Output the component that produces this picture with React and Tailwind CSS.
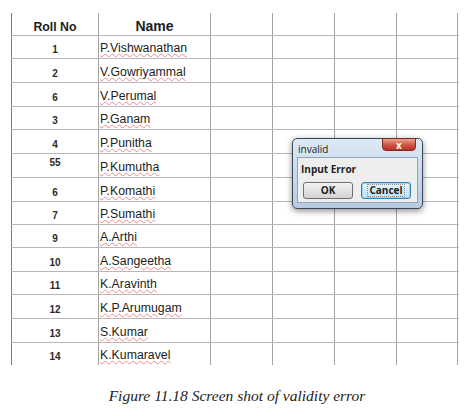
import React from 'react';

const rows = [
  { no: '1', name: 'P.Vishwanathan', h: 'h-[23px]' },
  { no: '2', name: 'V.Gowriyammal', h: 'h-[24px]' },
  { no: '6', name: 'V.Perumal', h: 'h-[24px]' },
  { no: '3', name: 'P.Ganam', h: 'h-[23px]' },
  { no: '4', name: 'P.Punitha', h: 'h-[24px]' },
  { no: '55', name: 'P.Kumutha', h: 'h-[24px]', top: true, sel: true },
  { no: '6', name: 'P.Komathi', h: 'h-[24px]' },
  { no: '7', name: 'P.Sumathi', h: 'h-[23px]' },
  { no: '9', name: 'A.Arthi', h: 'h-[23px]' },
  { no: '10', name: 'A.Sangeetha', h: 'h-[24px]' },
  { no: '11', name: 'K.Aravinth', h: 'h-[23px]' },
  { no: '12', name: 'K.P.Arumugam', h: 'h-[24px]' },
  { no: '13', name: 'S.Kumar', h: 'h-[24px]' },
  { no: '14', name: 'K.Kumaravel', h: 'h-[22px]', last: true },
];

function EmptyCells() {
  return (
    <>
      <div className="w-[62px] border-l border-[#a3a3a3]" />
      <div className="w-[62px] border-l border-[#a3a3a3]" />
      <div className="w-[62px] border-l border-[#a3a3a3]" />
      <div className="w-[62px] border-l border-r border-[#a3a3a3]" />
    </>
  );
}

function ErrorDialog() {
  return (
    <div className="absolute left-[281px] top-[125px] w-[131px] h-[71px] rounded-[5px] border border-[#3b4756] bg-gradient-to-b from-[#dce9f6] to-[#b7cbe0] shadow-[0_2px_6px_rgba(0,0,0,0.45)] font-['Open_Sans',sans-serif]">
      <div className="relative h-[18px] pl-[5px] pt-[4px] text-[10px] leading-[12px] text-[#1b1b1b]">
        invalid
        <div className="absolute right-[6px] top-[-1px] w-[34px] h-[13px] rounded-b-[4px] border border-[#7b2b21] bg-gradient-to-b from-[#eba392] via-[#d2574a] to-[#b8301f] flex items-center justify-center">
          <span className="text-white font-bold text-[10px] leading-none">x</span>
        </div>
      </div>
      <div className="mx-[4px] h-[46px] border border-[#8fa4ba] bg-[#eeeeee] px-[3px] pt-[5px]">
        <div className="text-[10px] leading-[13px] font-bold text-[#222]">Input Error</div>
        <div className="mt-[6px] flex gap-[8px] pl-[2px]">
          <div className="w-[50px] h-[17px] rounded-[3px] border border-[#6f6f6f] bg-gradient-to-b from-[#f4f4f4] to-[#d3d3d3] flex items-center justify-center text-[10px] font-bold text-[#222]">
            OK
          </div>
          <div className="w-[50px] h-[17px] rounded-[3px] border border-[#3c7fb1] bg-gradient-to-b from-[#e6f5fd] to-[#bfe2f5] shadow-[inset_0_0_0_1px_#9fd3f2] flex items-center justify-center text-[10px] font-bold text-[#222]">
            <span className="border border-dotted border-[#8a8a8a] px-[1px] leading-[11px]">Cancel</span>
          </div>
        </div>
      </div>
    </div>
  );
}

export default function App() {
  return (
    <div className="w-[474px] h-[416px] bg-white font-['Liberation_Sans',Arial,sans-serif] text-[#1c1c1c]">
      <div className="pt-[13px] pl-[11px]">
        <div className="relative w-[448px]">
          {/* header */}
          <div className="flex h-[23px] border-b border-[#b8b8b8]">
            <div className="w-[87px] border-l border-[#7a7a7a] flex items-center justify-center text-[12.3px] font-bold pt-[7px]">
              Roll No
            </div>
            <div className="w-[112px] border-l border-[#a3a3a3] flex items-center justify-center text-[14px] font-bold pt-[5px]">
              Name
            </div>
            <EmptyCells />
          </div>
          {rows.map((r, i) => (
            <div key={i} className={`flex ${r.h} ${r.last ? '' : 'border-b border-[#b8b8b8]'}`}>
              <div
                className={`w-[87px] border-l ${r.sel ? 'border-[#3b7dc4]' : 'border-[#7a7a7a]'} flex justify-center text-[10px] font-bold text-[#2a2a2a] ${r.top ? 'items-start pt-[1px]' : 'items-end pb-[1px]'}`}
              >
                {r.no}
              </div>
              <div className="w-[112px] border-l border-[#a3a3a3] flex items-end pl-[1px] pb-[2px]">
                <span className="text-[12.3px] leading-[15px] underline decoration-wavy decoration-[#ec8a8a] decoration-[1px] underline-offset-[1px]">
                  {r.name}
                </span>
              </div>
              <EmptyCells />
            </div>
          ))}
          <ErrorDialog />
        </div>
      </div>
      <div className="mt-[19px] text-center font-['Liberation_Serif',serif] italic text-[15.5px] text-[#222]">
        Figure 11.18 Screen shot of validity error
      </div>
    </div>
  );
}
